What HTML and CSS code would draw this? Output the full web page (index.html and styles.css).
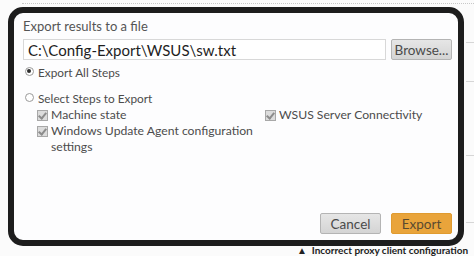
FILE: index.html
```html
<!DOCTYPE html>
<html lang="en">
<head>
<meta charset="UTF-8">
<meta name="viewport" content="width=device-width, initial-scale=1.0">
<title>Export results</title>
<link rel="stylesheet" href="styles.css">
</head>
<body>

<div class="backdrop">
    <div class="dots"></div>
    <div class="rule r1"></div>
    <div class="rule r2"></div>
    <div class="rule r3"></div>
    <div class="rule r4"></div>

    <div class="dialog">
        <div class="label">Export results to a file</div>
        <div class="fileRow">
            <input type="text" class="pathInput" value="C:\Config-Export\WSUS\sw.txt">
            <button class="btn browse">Browse...</button>
        </div>

        <div class="option first">
            <span class="radio checked"></span>
            <span>Export All Steps</span>
        </div>

        <div class="option second">
            <span class="radio"></span>
            <span>Select Steps to Export</span>
        </div>

        <div class="steps">
            <div class="stepCol">
                <div class="step"><span class="check"></span><span class="stepText">Machine state</span></div>
                <div class="step"><span class="check"></span><span class="stepText">Windows Update Agent configuration settings</span></div>
            </div>
            <div class="stepCol">
                <div class="step"><span class="check"></span><span class="stepText">WSUS Server Connectivity</span></div>
            </div>
        </div>

        <div class="actions">
            <button class="btn cancel">Cancel</button>
            <button class="btn export">Export</button>
        </div>
    </div>

    <div class="below">&#9650;&nbsp;&nbsp;Incorrect proxy client configuration</div>
</div>

</body>
</html>
```

FILE: styles.css
```css
html, body {
    margin: 0;
    padding: 0;
    background-color: #fbfbfb;
}

.backdrop {
    position: relative;
    width: 474px;
    height: 256px;
    overflow: hidden;
    padding-top: 7px;
    box-sizing: border-box;
    font-family: Lato, "Noto Sans", sans-serif;
}

.dots {
    position: absolute;
    left: 22px;
    right: 0;
    top: 3px;
    border-top: 1px dotted #c8c8c8;
}

.rule {
    position: absolute;
    right: 0;
    width: 8px;
    border-top: 1px solid #d6d6d6;
}

.r1 { top: 42px; }
.r2 { top: 81px; }
.r3 { top: 155px; }
.r4 { top: 222px; }

.dialog {
    position: relative;
    margin-left: 8px;
    width: 456px;
    height: 239px;
    box-sizing: border-box;
    border: 6px solid #1d1d1d;
    border-radius: 15px;
    background-color: #fdfdfe;
    padding: 5px 6px 0 9px;
    display: flex;
    flex-direction: column;
    color: #4a4a4a;
    font-size: 12.2px;
}

.label {
    line-height: 16px;
    color: #555555;
    font-size: 13px;
}

.fileRow {
    display: flex;
    align-items: center;
    gap: 5px;
    margin-top: 5px;
}

.pathInput {
    flex: 1;
    height: 21px;
    box-sizing: border-box;
    border: 1px solid #d8d8d8;
    background: #ffffff;
    padding: 0 4px;
    font-family: Lato, "Noto Sans", sans-serif;
    font-size: 15px;
    color: #1e1e1e;
    outline: none;
}

.btn {
    height: 21px;
    box-sizing: border-box;
    border: 1px solid #b4b4b4;
    border-radius: 2px;
    background: linear-gradient(#e6e6e6, #d4d4d4);
    font-family: Lato, "Noto Sans", sans-serif;
    font-size: 13.5px;
    color: #4a4a4a;
    padding: 0;
    cursor: pointer;
}

.browse {
    width: 61px;
}

.option {
    display: flex;
    align-items: center;
    gap: 4px;
    line-height: 16px;
    margin-left: 2px;
    color: #4c4c4c;
    font-size: 11.8px;
}

.option.first {
    margin-top: 5px;
}

.option.second {
    margin-top: 10px;
}

.radio {
    width: 7px;
    height: 7px;
    border: 1px solid #9a9a9a;
    border-radius: 50%;
    background: #ffffff;
    position: relative;
    top: -2px;
}

.radio.checked::after {
    content: "";
    position: absolute;
    left: 1px;
    top: 1px;
    width: 4px;
    height: 4px;
    border-radius: 50%;
    background: #2e2e2e;
}

.steps {
    display: flex;
    padding-left: 14px;
}

.stepCol {
    display: flex;
    flex-direction: column;
    flex: none;
}

.stepCol:first-child {
    width: 228px;
}

.step {
    display: flex;
    align-items: flex-start;
    gap: 3px;
    line-height: 16px;
    color: #4c4c4c;
}

.stepText {
    width: 205px;
}

.check {
    flex: none;
    width: 9px;
    height: 9px;
    margin-top: 3px;
    border: 1px solid #a8a8a8;
    background: #dcdcdc;
    position: relative;
}

.check::after {
    content: "";
    position: absolute;
    left: 2px;
    top: 0px;
    width: 3px;
    height: 6px;
    border: solid #8c8c8c;
    border-width: 0 2px 2px 0;
    transform: rotate(40deg);
}

.actions {
    margin-top: auto;
    margin-bottom: 6px;
    display: flex;
    justify-content: flex-end;
    gap: 10px;
}

.cancel {
    width: 61px;
}

.export {
    width: 61px;
    border-color: #e09b30;
    background: #e9a43b;
    color: #5a4a30;
}

.below {
    position: absolute;
    left: 297px;
    top: 244px;
    line-height: 12px;
    font-size: 10px;
    font-weight: bold;
    color: #222222;
    white-space: nowrap;
}
```
